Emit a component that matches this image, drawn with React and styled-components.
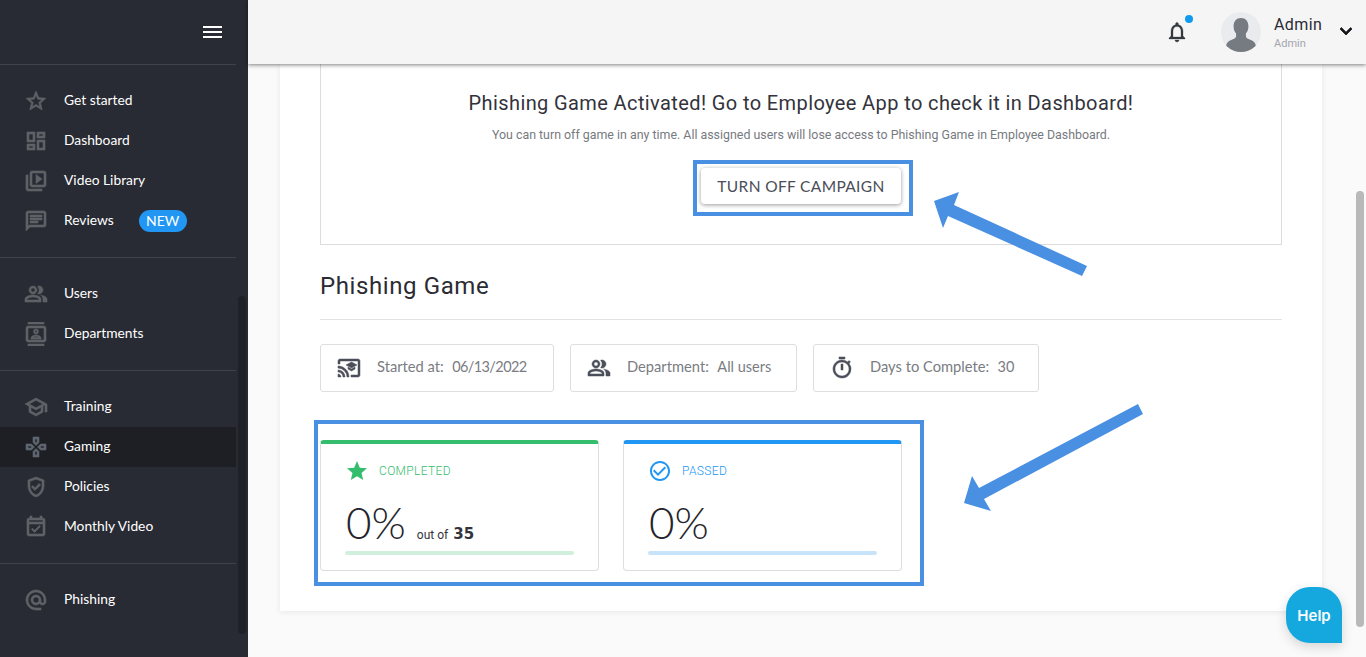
import React from 'react';
import styled, { createGlobalStyle } from 'styled-components';
import {
  MdStarBorder, MdOutlineDashboard, MdOutlineVideoLibrary, MdOutlineChat, MdOutlinePeopleAlt,
  MdOutlineContacts, MdOutlineSchool, MdOutlineGamepad, MdOutlineGppGood, MdOutlineEventAvailable,
  MdAlternateEmail, MdOutlineCastForEducation, MdOutlineTimer, MdStar, MdCheckCircleOutline,
  MdOutlineNotifications, MdKeyboardArrowDown,
} from 'react-icons/md';

const Global = createGlobalStyle`
  html, body { margin: 0; padding: 0; height: 100%; overflow: hidden; }
  * { box-sizing: border-box; }
  body { font-family: Lato, "Open Sans", sans-serif; background: #fafafa; }
`;

const Shell = styled.div`
  display: grid;
  grid-template-columns: 248px 1fr;
  height: 657px;
  overflow: hidden;
  position: relative;
`;

const Sidebar = styled.aside`
  background: #282b33;
  position: relative;
  padding-right: 12px;
  display: flex;
  flex-direction: column;
`;

const SideTop = styled.div`
  height: 65px;
  display: flex;
  align-items: center;
  justify-content: flex-end;
  padding-right: 14px;
  padding-bottom: 1px;
  border-bottom: 1px solid #3f424a;
`;

const Burger = styled.div`
  width: 19px;
  height: 12px;
  display: flex;
  flex-direction: column;
  justify-content: space-between;
  span { display: block; height: 2px; background: #fff; }
`;

const NavGroup = styled.nav`
  padding: 16px 0;
  border-bottom: ${p => (p.$last ? 'none' : '1px solid #3f424a')};
`;

const NavItem = styled.div`
  height: 40px;
  display: flex;
  align-items: center;
  padding-left: 24px;
  color: #fff;
  font-size: 13.8px;
  background: ${p => (p.$active ? '#1d1f24' : 'transparent')};
  svg {
    color: ${p => (p.$active ? '#5f6670' : '#5f6166')};
    font-size: 24px;
    margin-right: 16px;
    flex: none;
  }
  svg path:not([fill="none"]) { stroke: currentColor; stroke-width: 0.6; }
`;

const NavLabel = styled.span`
  padding-bottom: 4px;
`;

const NewBadge = styled.span`
  margin-left: 25px;
  width: 48px;
  height: 22px;
  border-radius: 11px;
  background: #2196f3;
  display: flex;
  align-items: center;
  justify-content: center;
  font-size: 14px;
  line-height: 22px;
`;

const SideScroll = styled.div`
  position: absolute;
  left: 238px;
  top: 296px;
  width: 8px;
  height: 338px;
  border-radius: 4px;
  background: #1f2127;
`;

const Main = styled.div`
  display: flex;
  flex-direction: column;
  min-width: 0;
  position: relative;
`;

const Header = styled.header`
  height: 64px;
  flex: none;
  background: #f5f5f5;
  box-shadow: 0 1px 4px rgba(0, 0, 0, 0.5);
  display: flex;
  align-items: center;
  justify-content: flex-end;
  padding-right: 8px;
  position: relative;
  z-index: 2;
`;

const Bell = styled.div`
  position: relative;
  width: 24px;
  height: 24px;
  margin-right: 32px;
  color: #343a40;
  svg { font-size: 24px; display: block; }
  svg path:not([fill="none"]) { stroke: currentColor; stroke-width: 0.3; }
`;

const Dot = styled.span`
  position: absolute;
  top: -5px;
  right: -4px;
  width: 8px;
  height: 8px;
  border-radius: 50%;
  background: #0f9aee;
`;

const Avatar = styled.div`
  width: 40px;
  height: 40px;
  border-radius: 50%;
  background: #e9ebee;
  overflow: hidden;
  margin-right: 13px;
  svg { display: block; }
`;

const UserText = styled.div`
  width: 60px;
  display: flex;
  flex-direction: column;
  font-family: Roboto, sans-serif;
`;

const UserName = styled.span`
  font-size: 16px;
  line-height: 23px;
  color: #2b2b33;
  letter-spacing: 0.4px;
`;

const UserRole = styled.span`
  font-size: 11px;
  line-height: 16px;
  color: #a3a6ad;
`;

const Caret = styled(MdKeyboardArrowDown)`
  font-size: 24px;
  color: #16181d;
  margin-top: -2px;
  path:not([fill="none"]) { stroke: currentColor; stroke-width: 0.8; }
`;

const Content = styled.main`
  flex: 1;
  padding: 0 44px 46px 32px;
  min-height: 0;
`;

const Card = styled.section`
  background: #fff;
  height: 547px;
  padding: 0 40px;
  box-shadow: 0 1px 6px rgba(0, 0, 0, 0.08);
`;

const Activated = styled.div`
  height: 181px;
  border: 1px solid #dcdcdc;
  border-top: none;
  display: flex;
  flex-direction: column;
  align-items: center;
  padding-top: 26px;
`;

const ActivatedTitle = styled.h2`
  margin: 0;
  font: 400 20px/26px Roboto, sans-serif;
  letter-spacing: 0.39px;
  color: #33333b;
`;

const ActivatedSub = styled.p`
  margin: 10px 0 0;
  font: 400 12.4px/18px Roboto, sans-serif;
  color: #777a80;
`;

const OffButton = styled.button`
  margin-top: 24px;
  width: 200px;
  height: 36px;
  border: none;
  border-radius: 4px;
  background: #fff;
  color: #4a4d57;
  font: 400 15.5px/36px Lato, sans-serif;
  letter-spacing: 0.35px;
  padding: 0;
  box-shadow: 0 1px 4px rgba(0, 0, 0, 0.4);
`;

const GameTitle = styled.h1`
  margin: 0;
  height: 75px;
  border-bottom: 1px solid #e2e2e2;
  padding-top: 25px;
  font: 400 24px/32px Roboto, sans-serif;
  letter-spacing: 0.6px;
  color: #2b2b33;
`;

const Chips = styled.div`
  display: flex;
  gap: 16px;
  margin-top: 24px;
`;

const Chip = styled.div`
  width: ${p => p.$w}px;
  height: 48px;
  border: 1px solid #dedede;
  border-radius: 3px;
  display: flex;
  align-items: center;
  padding-left: 16px;
  padding-bottom: 4px;
  color: #7a7c82;
  white-space: pre;
  svg { font-size: 24px; color: #4b4f5a; margin-right: 16px; flex: none; margin-top: 4px; }
  svg path:not([fill="none"]) { stroke: currentColor; stroke-width: 0.5; }
`;

const ChipLabel = styled.span`
  font-size: 14.7px;
  margin-right: 8.5px;
`;

const ChipValue = styled.span`
  font-size: 14.5px;
  letter-spacing: ${p => (p.$tight ? '-0.6px' : '0')};
`;

const Stats = styled.div`
  display: flex;
  gap: 24px;
  margin-top: 48px;
`;

const Stat = styled.div`
  width: 279px;
  height: 131px;
  border: 1px solid #dedede;
  border-top: 4px solid ${p => p.$c};
  border-radius: 4px;
  padding: 15px 24px 0;
`;

const StatHead = styled.div`
  display: flex;
  align-items: center;
  height: 24px;
  color: ${p => p.$c};
  font: 300 12px/24px Roboto, sans-serif;
  letter-spacing: 0.35px;
  svg { font-size: 24px; margin-right: 10px; flex: none; }
`;

const StatValue = styled.div`
  display: flex;
  align-items: baseline;
  height: 48px;
  margin-top: 15px;
  margin-left: 1px;
  color: #24242b;
  font: 300 44px/48px Lato, sans-serif;
`;

const OutOf = styled.span`
  font: 400 12px/16px Roboto, sans-serif;
  margin-left: 11px;
  color: #33333b;
`;

const OutOfNum = styled.b`
  font: 700 15px/16px "DejaVu Sans", sans-serif;
  margin-left: 5px;
  color: #33333b;
`;

const Track = styled.div`
  height: 4px;
  width: 229px;
  margin-top: 5px;
  border-radius: 2px;
  background: ${p => p.$c};
`;

const PageScroll = styled.div`
  position: absolute;
  left: 1356px;
  top: 191px;
  width: 8px;
  height: 436px;
  border-radius: 4px;
  background: #b9b9b9;
`;

const Help = styled.div`
  position: absolute;
  left: 1286px;
  top: 587px;
  width: 56px;
  height: 56px;
  border-radius: 24px 24px 0 24px;
  background: #14a8de;
  color: #fff;
  display: flex;
  align-items: center;
  justify-content: center;
  font: 600 15px/1 Inter, sans-serif;
  box-shadow: 0 4px 12px rgba(0, 0, 0, 0.15);
  z-index: 3;
`;

const Highlight = styled.div`
  position: absolute;
  left: ${p => p.$x}px;
  top: ${p => p.$y}px;
  width: ${p => p.$w}px;
  height: ${p => p.$h}px;
  border: 4px solid #4a90e2;
  pointer-events: none;
`;

const Arrow = styled.svg`
  position: absolute;
  left: 0;
  top: 0;
  pointer-events: none;
  z-index: 1;
`;

const nav = [
  [[MdStarBorder, 'Get started'], [MdOutlineDashboard, 'Dashboard'], [MdOutlineVideoLibrary, 'Video Library'], [MdOutlineChat, 'Reviews', true]],
  [[MdOutlinePeopleAlt, 'Users'], [MdOutlineContacts, 'Departments']],
  [[MdOutlineSchool, 'Training'], [MdOutlineGamepad, 'Gaming', false, true], [MdOutlineGppGood, 'Policies'], [MdOutlineEventAvailable, 'Monthly Video']],
  [[MdAlternateEmail, 'Phishing']],
];

export default function App() {
  return (
    <>
      <Global />
      <Shell>
        <Sidebar>
          <SideTop><Burger><span /><span /><span /></Burger></SideTop>
          {nav.map((group, i) => (
            <NavGroup key={i} $last={i === nav.length - 1}>
              {group.map(([Icon, label, isNew, active]) => (
                <NavItem key={label} $active={active}>
                  <Icon />
                  <NavLabel>{label}</NavLabel>
                  {isNew && <NewBadge>NEW</NewBadge>}
                </NavItem>
              ))}
            </NavGroup>
          ))}
          <SideScroll />
        </Sidebar>
        <Main>
          <Header>
            <Bell><MdOutlineNotifications /><Dot /></Bell>
            <Avatar>
              <svg width="40" height="40" viewBox="0 0 40 40">
                <path fill="#767b82" d="M20 6c4.6 0 7.4 3.3 7.4 8.2 0 3-.9 5.600-2.500 7.300v2.800c0 1.300 1 2 2.600 2.700l3.500 1.500c2.300 1 3.500 2.900 4 5.500V40H5v-6c.5-2.600 1.700-4.500 4-5.500l3.500-1.500c1.600-.7 2.600-1.400 2.600-2.700v-2.800c-1.600-1.700-2.500-4.300-2.500-7.300C12.600 9.300 15.400 6 20 6z" />
              </svg>
            </Avatar>
            <UserText>
              <UserName>Admin</UserName>
              <UserRole>Admin</UserRole>
            </UserText>
            <Caret />
          </Header>
          <Content>
            <Card>
              <Activated>
                <ActivatedTitle>Phishing Game Activated! Go to Employee App to check it in Dashboard!</ActivatedTitle>
                <ActivatedSub>You can turn off game in any time. All assigned users will lose access to Phishing Game in Employee Dashboard.</ActivatedSub>
                <OffButton>TURN OFF CAMPAIGN</OffButton>
              </Activated>
              <GameTitle>Phishing Game</GameTitle>
              <Chips>
                <Chip $w={234}><MdOutlineCastForEducation /><ChipLabel>Started at:</ChipLabel><ChipValue $tight>06/13/2022</ChipValue></Chip>
                <Chip $w={227}><MdOutlinePeopleAlt /><ChipLabel>Department:</ChipLabel><ChipValue>All users</ChipValue></Chip>
                <Chip $w={226}><MdOutlineTimer /><ChipLabel>Days to Complete:</ChipLabel><ChipValue>30</ChipValue></Chip>
              </Chips>
              <Stats>
                <Stat $c="#35bd6e">
                  <StatHead $c="#35bd6e"><MdStar />COMPLETED</StatHead>
                  <StatValue>0%<OutOf>out of</OutOf><OutOfNum>35</OutOfNum></StatValue>
                  <Track $c="#d0f0dd" />
                </Stat>
                <Stat $c="#2196f3">
                  <StatHead $c="#2196f3"><MdCheckCircleOutline />PASSED</StatHead>
                  <StatValue>0%</StatValue>
                  <Track $c="#c8e4fb" />
                </Stat>
              </Stats>
            </Card>
          </Content>
        </Main>
        <Highlight $x={693} $y={160} $w={220} $h={56} />
        <Highlight $x={314} $y={420} $w={610} $h={166} />
        <Arrow width="1366" height="657" viewBox="0 0 1366 657">
          <polygon fill="#4a90e2" points="934,201 959,192 954,205 1087,266 1082,276 948,216 943,228" />
          <polygon fill="#4a90e2" points="1138,404 1143,414 984,499 991,511 964,503 972,476 979,488" />
        </Arrow>
        <PageScroll />
        <Help>Help</Help>
      </Shell>
    </>
  );
}
